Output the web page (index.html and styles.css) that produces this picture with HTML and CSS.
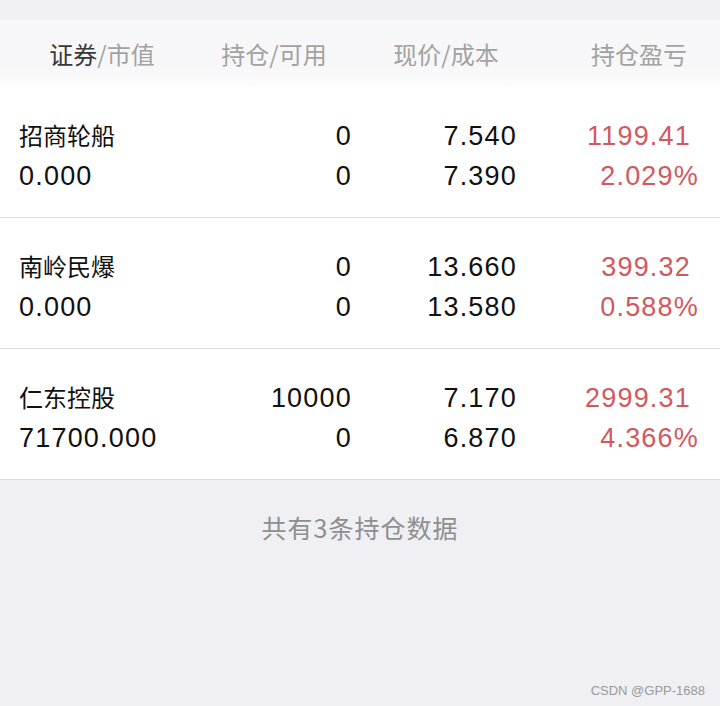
FILE: index.html
```html
<!DOCTYPE html>
<html lang="zh-CN">
<head>
  <meta charset="UTF-8">
  <meta name="viewport" content="width=device-width, initial-scale=1">
  <title>持仓</title>
  <link rel="stylesheet" href="styles.css">
</head>
<body>
  <div class="page">
    <div class="top-strip"></div>
    <div class="head">
      <div class="head-cell"><span class="strong">证券</span>/市值</div>
      <div class="head-cell">持仓/可用</div>
      <div class="head-cell">现价/成本</div>
      <div class="head-cell">持仓盈亏</div>
    </div>

    <div class="list">
      <div class="row">
        <div class="cell left"><span class="name">招商轮船</span><span class="num">0.000</span></div>
        <div class="cell"><span class="num">0</span><span class="num">0</span></div>
        <div class="cell"><span class="num">7.540</span><span class="num">7.390</span></div>
        <div class="cell red"><span class="num amount">1199.41</span><span class="num">2.029%</span></div>
      </div>
      <div class="row">
        <div class="cell left"><span class="name">南岭民爆</span><span class="num">0.000</span></div>
        <div class="cell"><span class="num">0</span><span class="num">0</span></div>
        <div class="cell"><span class="num">13.660</span><span class="num">13.580</span></div>
        <div class="cell red"><span class="num amount">399.32</span><span class="num">0.588%</span></div>
      </div>
      <div class="row">
        <div class="cell left"><span class="name">仁东控股</span><span class="num">71700.000</span></div>
        <div class="cell"><span class="num">10000</span><span class="num">0</span></div>
        <div class="cell"><span class="num">7.170</span><span class="num">6.870</span></div>
        <div class="cell red"><span class="num amount">2999.31</span><span class="num">4.366%</span></div>
      </div>
    </div>

    <div class="footer">共有3条持仓数据</div>
    <div class="mark">CSDN @GPP-1688</div>
  </div>
</body>
</html>
```

FILE: styles.css
```css
body {
  margin: 0;
  padding: 0;
  background: #efeff4;
  font-family: "Liberation Sans", "Noto Sans CJK SC", sans-serif;
}
.page {
  position: relative;
  width: 720px;
  height: 706px;
  overflow: hidden;
}
.top-strip {
  height: 20px;
  background: #efeff4;
}
.head {
  display: grid;
  grid-template-columns: 204px 140px 204px 1fr;
  align-items: center;
  height: 67px;
  background: linear-gradient(#f7f7f9 70%, #fdfdfd);
  font-family: "Noto Sans CJK SC", sans-serif;
  font-size: 24px;
  color: #a2a2a2;
}
.head-cell {
  text-align: center;
}
.head-cell:last-child {
  padding-left: 10px;
}
.strong {
  color: #383838;
}
.list {
  background: #fff;
}
.row {
  display: grid;
  grid-template-columns: 182px 150px 165px 182px;
  padding: 29px 22px 0 19px;
  height: 131px;
  box-sizing: border-box;
  border-bottom: 1px solid #dddde0;
}
.cell {
  display: flex;
  flex-direction: column;
  align-items: flex-end;
  color: #111;
}
.cell.left {
  align-items: flex-start;
}
.cell.red {
  color: #d2585f;
}
.name,
.num {
  height: 40px;
  line-height: 40px;
  white-space: nowrap;
}
.name {
  font-family: "Noto Sans CJK SC", sans-serif;
  font-size: 24px;
  margin-top: -1px;
  margin-bottom: 1px;
}
.num {
  font-size: 27px;
  letter-spacing: 1.2px;
  margin-right: -1px;
}
.amount {
  padding-right: 8px;
}
.footer {
  text-align: center;
  padding-top: 29px;
  font-family: "Noto Sans CJK SC", sans-serif;
  font-size: 25px;
  letter-spacing: 1px;
  color: #8e8e8e;
}
.mark {
  position: absolute;
  right: 15px;
  bottom: 8px;
  font-size: 13px;
  color: #9a9a9a;
}
```
